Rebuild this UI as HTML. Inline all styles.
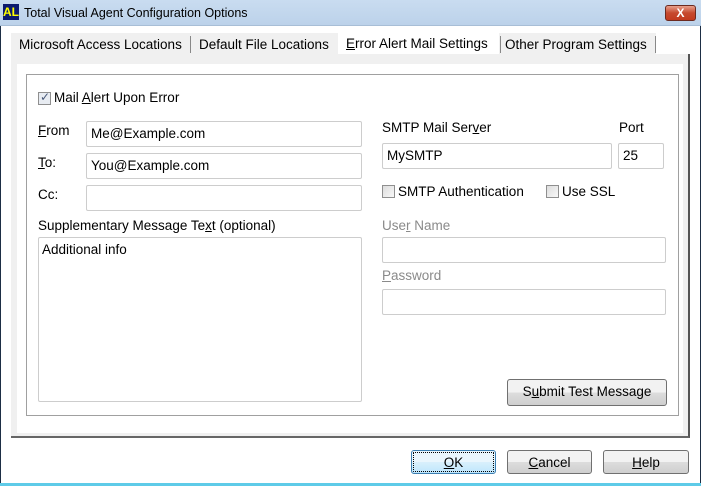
<!DOCTYPE html>
<html><head><style>
*{box-sizing:border-box;margin:0;padding:0}
body{width:701px;height:486px;overflow:hidden;background:#fff;font-family:"Liberation Sans",sans-serif;font-size:12.5px;color:#000;position:relative}
.a{position:absolute}
.title{left:0;top:0;width:701px;height:26px;background:linear-gradient(#c9dcf0,#bcd2ea);border-bottom:1px solid #a8bed6}
.inp{position:absolute;background:#fff;border:1px solid #cdcdcd;border-radius:2px;padding:4px 0 0 4px;font-size:13.5px}
.btn{position:absolute;border:1px solid #707070;border-radius:3px;background:linear-gradient(#f2f2f2 50%,#dddddd 50%,#cfcfcf);text-align:center;padding-top:4px;font-size:13.5px}
.cb{position:absolute;width:13px;height:13px;border:1px solid #8f8f8f;background:linear-gradient(135deg,#ddd,#f8f8f8)}
.lbl{position:absolute;font-size:13.5px}
u{text-decoration:underline}
</style></head><body>
<div class="a title"></div>
<div class="a" style="left:3px;top:4px;width:16px;height:16px;background:#0b1a6e;color:#ff0;font-weight:bold;font-size:12px;line-height:16px;text-align:center">AL</div>
<div class="a" style="left:24px;top:6px;font-size:12.5px">Total Visual Agent Configuration Options</div>
<div class="a" style="left:665px;top:5px;width:31px;height:16px;border:1px solid #6b2a20;border-radius:3px;background:linear-gradient(#e8a08c,#c6492e 50%,#c23a1f);color:#fff;font-weight:bold;text-align:center;font-size:12px;line-height:14px">X</div>
<div class="a" style="left:0;top:26px;width:1px;height:460px;background:#1d2e45"></div>
<div class="a" style="left:700px;top:26px;width:1px;height:460px;background:#1d2e45"></div>
<div class="a" style="left:0;top:483px;width:701px;height:3px;background:#5ecbe8"></div>
<!-- tabs -->
<div class="a" style="left:11px;top:33px;width:645px;height:21px;background:#f0f0f0"></div>
<div class="a" style="left:338px;top:32px;width:161px;height:23px;background:#fff"></div>
<div class="a" style="left:19px;top:37px;font-size:13.5px">Microsoft Access Locations</div>
<div class="a" style="left:190px;top:36px;width:1px;height:17px;background:#888"></div>
<div class="a" style="left:199px;top:37px;font-size:13.5px">Default File Locations</div>
<div class="a" style="left:346px;top:36px;font-size:13.5px"><u>E</u>rror Alert Mail Settings</div>
<div class="a" style="left:500px;top:36px;width:1px;height:17px;background:#888"></div>
<div class="a" style="left:505px;top:37px;font-size:13.5px">Other Program Settings</div>
<div class="a" style="left:655px;top:36px;width:1px;height:17px;background:#888"></div>
<!-- panel -->
<div class="a" style="left:11px;top:54px;width:679px;height:384px;background:#f0f0f0;border-right:2px solid #555;border-bottom:2px solid #666"></div>
<div class="a" style="left:17px;top:64px;width:666px;height:369px;background:#fff"></div>
<div class="a" style="left:26px;top:74px;width:653px;height:342px;background:#fff;border:1px solid #a0a0a0"></div>
<div class="cb" style="left:38px;top:92px;background:#e8ecf2"><span style="position:absolute;left:1px;top:-3px;font-size:12px;color:#4a5a7a">✓</span></div>
<div class="lbl" style="left:54px;top:90px">Mail <u>A</u>lert Upon Error</div>
<div class="lbl" style="left:38px;top:123px"><u>F</u>rom</div>
<div class="inp" style="left:86px;top:121px;width:276px;height:26px">Me@Example.com</div>
<div class="lbl" style="left:38px;top:155px"><u>T</u>o:</div>
<div class="inp" style="left:86px;top:153px;width:276px;height:26px">You@Example.com</div>
<div class="lbl" style="left:38px;top:187px">Cc:</div>
<div class="inp" style="left:86px;top:185px;width:276px;height:26px"></div>
<div class="lbl" style="left:38px;top:218px">Supplementary Message Te<u>x</u>t (optional)</div>
<div class="inp" style="left:38px;top:237px;width:324px;height:165px;padding:4px 0 0 3px">Additional info</div>
<div class="lbl" style="left:382px;top:120px">SMTP Mail Ser<u>v</u>er</div>
<div class="lbl" style="left:619px;top:120px">Port</div>
<div class="inp" style="left:382px;top:143px;width:230px;height:26px">MySMTP</div>
<div class="inp" style="left:618px;top:143px;width:46px;height:26px">25</div>
<div class="cb" style="left:382px;top:185px"></div>
<div class="lbl" style="left:398px;top:184px">SMTP Authentication</div>
<div class="cb" style="left:546px;top:185px"></div>
<div class="lbl" style="left:562px;top:184px">Use SSL</div>
<div class="lbl" style="left:382px;top:218px;color:#8a8a8a">Use<u>r</u> Name</div>
<div class="inp" style="left:382px;top:237px;width:284px;height:26px"></div>
<div class="lbl" style="left:382px;top:268px;color:#8a8a8a"><u>P</u>assword</div>
<div class="inp" style="left:382px;top:289px;width:284px;height:26px"></div>
<div class="btn" style="left:507px;top:379px;width:160px;height:27px">S<u>u</u>bmit Test Message</div>
<div class="btn" style="left:411px;top:450px;width:85px;height:24px;border-color:#3c7fb1;outline:1px dotted #000;outline-offset:-3px;background:linear-gradient(#eaf6fd 50%,#d9f0fc 50%,#bee6fd)"><u>O</u>K</div>
<div class="btn" style="left:507px;top:450px;width:85px;height:24px"><u>C</u>ancel</div>
<div class="btn" style="left:603px;top:450px;width:86px;height:24px"><u>H</u>elp</div>
</body></html>
